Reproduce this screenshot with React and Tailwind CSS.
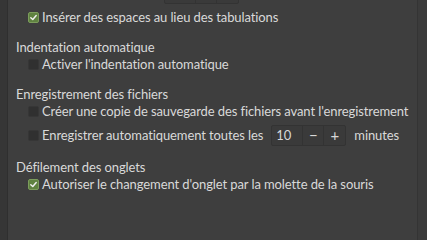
import React from "react";

const font = { fontFamily: "Lato, 'Noto Sans', sans-serif", letterSpacing: "-0.1px" };

function Check({ checked }) {
  if (checked) {
    return (
      <span className="w-[11px] h-[11px] shrink-0 rounded-[2px] bg-[#5f8240] border border-[#7c9c5c] flex items-center justify-center">
        <svg width="9" height="9" viewBox="0 0 10 10">
          <path d="M2 5.2 L4.2 7.3 L8 2.8" fill="none" stroke="#f0f0f0" strokeWidth="1.6" strokeLinecap="round" strokeLinejoin="round" />
        </svg>
      </span>
    );
  }
  return <span className="w-[11px] h-[11px] shrink-0 rounded-[2px] bg-[#303030] border border-[#363636]" />;
}

function CheckRow({ checked, children }) {
  return (
    <div className="h-[19px] flex items-center pl-[12px] gap-[3px]">
      <Check checked={checked} />
      <span className="whitespace-nowrap">{children}</span>
    </div>
  );
}

function Spin({ value }) {
  return (
    <div className="h-[21px] flex border border-[#333333] bg-[#3a3a3a] rounded-[2px] text-[#d8d8d8]">
      <div className="w-[31px] pl-[4px] flex items-center border-r border-[#333333]">{value}</div>
      <div className="w-[21px] flex items-center justify-center border-r border-[#333333] text-[15px]">−</div>
      <div className="w-[21px] flex items-center justify-center text-[15px]">+</div>
    </div>
  );
}

function Heading({ children }) {
  return <div className="h-[19px] pt-[4px] flex items-center whitespace-nowrap">{children}</div>;
}

export default function App() {
  return (
    <div className="w-[427px] h-[240px] overflow-hidden flex bg-[#3e3e3e] text-[13px] text-[#d9d9d9]" style={font}>
      <div className="w-[8px] bg-[#363636] border-r border-[#2f2f2f] shrink-0" />
      <div className="flex-1 pl-[8px] flex flex-col gap-[9px] mt-[-19px]">
        <div className="flex flex-col gap-[2px]">
          <div className="h-[25px] flex items-center pl-[12px]">
            <span className="w-[136px] whitespace-nowrap">Largeur des tabulations</span>
            <Spin value="4" />
          </div>
          <CheckRow checked>Insérer des espaces au lieu des tabulations</CheckRow>
        </div>
        <div className="flex flex-col">
          <Heading>Indentation automatique</Heading>
          <CheckRow>Activer l'indentation automatique</CheckRow>
        </div>
        <div className="flex flex-col">
          <Heading>Enregistrement des fichiers</Heading>
          <CheckRow>Créer une copie de sauvegarde des fichiers avant l'enregistrement</CheckRow>
          <div className="h-[25px] mt-[2px] flex items-center pl-[12px] gap-[3px]">
            <Check />
            <span className="whitespace-nowrap mr-[5px]">Enregistrer automatiquement toutes les</span>
            <Spin value="10" />
            <span className="ml-[5px]">minutes</span>
          </div>
        </div>
        <div className="flex flex-col mt-[-1px]">
          <Heading>Défilement des onglets</Heading>
          <CheckRow checked>Autoriser le changement d'onglet par la molette de la souris</CheckRow>
        </div>
      </div>
      <div className="w-[10px] shrink-0 bg-[#3b3b3b] border-l border-[#343434]" />
    </div>
  );
}
